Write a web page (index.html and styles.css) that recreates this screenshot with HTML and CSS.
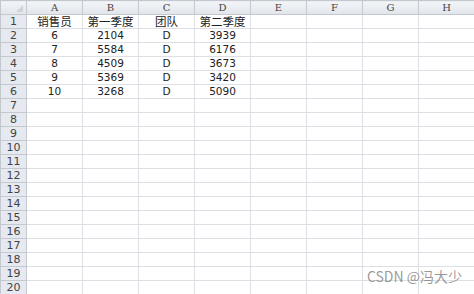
FILE: index.html
```html
<!DOCTYPE html>
<html lang="zh-CN">
<head>
  <meta charset="UTF-8" />
  <title>Sheet1</title>
  <link rel="stylesheet" href="styles.css">
</head>
<body>
  <table class="sheet">
    <colgroup>
      <col class="rowhead-col">
      <col><col><col><col><col><col><col><col>
    </colgroup>
    <thead>
      <tr>
        <th class="corner"><span class="tri"></span></th>
        <th>A</th><th>B</th><th>C</th><th>D</th><th>E</th><th>F</th><th>G</th><th>H</th>
      </tr>
    </thead>
    <tbody id="rows">
      <tr><th>1</th><td class="cjk">销售员</td><td class="cjk">第一季度</td><td class="cjk">团队</td><td class="cjk">第二季度</td><td></td><td></td><td></td><td></td></tr>
      <tr><th>2</th><td>6</td><td>2104</td><td>D</td><td>3939</td><td></td><td></td><td></td><td></td></tr>
      <tr><th>3</th><td>7</td><td>5584</td><td>D</td><td>6176</td><td></td><td></td><td></td><td></td></tr>
      <tr><th>4</th><td>8</td><td>4509</td><td>D</td><td>3673</td><td></td><td></td><td></td><td></td></tr>
      <tr><th>5</th><td>9</td><td>5369</td><td>D</td><td>3420</td><td></td><td></td><td></td><td></td></tr>
      <tr><th>6</th><td>10</td><td>3268</td><td>D</td><td>5090</td><td></td><td></td><td></td><td></td></tr>
    </tbody>
  </table>

  <div class="watermark">CSDN @冯大少</div>

  <script>
    const body = document.getElementById('rows');
    for (let i = 7; i <= 20; i++) {
      const row = document.createElement('tr');
      row.innerHTML = `<th>${i}</th>` + '<td></td>'.repeat(8);
      body.appendChild(row);
    }
  </script>
</body>
</html>
```

FILE: styles.css
```css
html, body {
  margin: 0;
  padding: 0;
  background: #fff;
  overflow: hidden;
}
body {
  position: relative;
  width: 474px;
  height: 294px;
  font-family: "DejaVu Sans", "Noto Sans CJK SC", sans-serif;
  color: #222;
}
.sheet {
  border-collapse: collapse;
  table-layout: fixed;
  width: 474px;
}
.sheet col {
  width: 56px;
}
.sheet col.rowhead-col {
  width: 26px;
}
.sheet th,
.sheet td {
  height: 13px;
  padding: 0;
  border: 1px solid #dcdfe3;
  text-align: center;
  font-size: 10.5px;
  line-height: 13px;
  font-weight: normal;
  white-space: nowrap;
  overflow: hidden;
}
.sheet thead th {
  background: linear-gradient(#f3f5f8, #e1e5eb);
  border-color: #c4c9d0;
  font-family: "DejaVu Serif", "Liberation Serif", serif;
  font-size: 10px;
  color: #444;
}
.sheet tbody th {
  background: #e6eaf0;
  border-color: #c4c9d0;
  color: #444;
  font-family: "DejaVu Sans", sans-serif;
  font-size: 11px;
}
.sheet td.cjk {
  font-family: "Noto Sans CJK SC", sans-serif;
  font-size: 11.5px;
}
.corner {
  position: relative;
}
.tri {
  position: absolute;
  right: 3px;
  bottom: 2px;
  width: 0;
  height: 0;
  border-left: 7px solid transparent;
  border-bottom: 7px solid #d0d4da;
}
.watermark {
  position: absolute;
  right: 12px;
  bottom: 8px;
  font-family: "Noto Sans CJK SC", sans-serif;
  font-size: 14px;
  color: rgba(120, 120, 120, 0.75);
}
```
